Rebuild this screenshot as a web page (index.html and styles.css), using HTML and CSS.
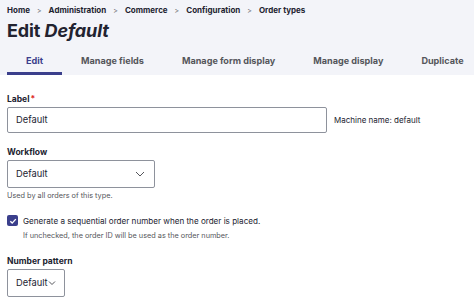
FILE: index.html
```html
<!DOCTYPE html>
<html lang="en">
<head>
    <meta charset="UTF-8">
    <title>Edit Default</title>
    <link rel="stylesheet" href="styles.css">
</head>
<body>
<div class="page_head">
    <div class="crumbs">
        <span>Home</span><span class="sep">&gt;</span>
        <span>Administration</span><span class="sep">&gt;</span>
        <span>Commerce</span><span class="sep">&gt;</span>
        <span>Configuration</span><span class="sep">&gt;</span>
        <span>Order types</span>
    </div>
    <h1 class="title">Edit <em>Default</em></h1>
    <div class="tabs">
        <a class="tab tab_active">Edit</a>
        <a class="tab">Manage fields</a>
        <a class="tab">Manage form display</a>
        <a class="tab">Manage display</a>
        <a class="tab">Duplicate</a>
    </div>
</div>
<div class="page_content">
    <div class="field field_label">
        <label class="lbl">Label<span class="req">*</span></label>
        <div class="row">
            <div class="input input_wide">Default</div>
            <span class="machine">Machine name: default</span>
        </div>
    </div>
    <div class="field field_wf">
        <label class="lbl">Workflow</label>
        <div class="input select select_wf">Default
            <svg class="chev" width="10" height="6" viewBox="0 0 10 6"><path d="M1 1l4 4 4-4" fill="none" stroke="#55565b" stroke-width="1"/></svg>
        </div>
        <div class="desc">Used by all orders of this type.</div>
    </div>
    <div class="field check_field">
        <div class="check_row">
            <span class="box"><svg width="10" height="10" viewBox="0 0 10 10"><path d="M2.3 5.2l1.9 1.9 3.6-4" fill="none" stroke="#fff" stroke-width="1.4"/></svg></span>
            <span class="check_lbl">Generate a sequential order number when the order is placed.</span>
        </div>
        <div class="desc desc_check">If unchecked, the order ID will be used as the order number.</div>
    </div>
    <div class="field field_np">
        <label class="lbl">Number pattern</label>
        <div class="input select select_np">Default
            <svg class="chev" width="8" height="6" viewBox="0 0 8 6"><path d="M1 1.5l3 3 3-3" fill="none" stroke="#55565b" stroke-width="1"/></svg>
        </div>
    </div>
</div>
</body>
</html>
```

FILE: styles.css
```css
html,body{
    margin: 0;
    padding: 0;
}
body{
    font-family: Inter, "Liberation Sans", sans-serif;
    color: #222330;
    background-color: #fff;
}
.page_head{
    background-color: #f3f4f9;
    padding: 5px 7px 0;
    height: 70px;
}
.crumbs{
    display: flex;
    align-items: center;
    font-size: 8px;
    font-weight: 700;
    height: 10px;
    white-space: nowrap;
}
.crumbs .sep{
    font-size: 7px;
    font-weight: 400;
    margin: 0 7px;
    color: #55565b;
}
.title{
    margin: 4px 0 0;
    font-size: 18px;
    line-height: 24px;
    font-weight: 700;
    color: #222330;
    letter-spacing: -0.1px;
}
.title em{
    font-style: italic;
}
.tabs{
    display: flex;
    margin-top: 8px;
}
.tab{
    flex-shrink: 0;
    white-space: nowrap;
    font-size: 9.1px;
    font-weight: 700;
    color: #55565b;
    padding: 0 19px;
    height: 24px;
    line-height: 20px;
    box-sizing: border-box;
    border-bottom: 3px solid transparent;
}
.tab_active{
    color: #3b3f8c;
    border-bottom-color: #3b3f8c;
}
.page_content{
    padding: 19px 7px 0;
}
.field{
    margin: 0;
}
.field_wf{
    margin-top: 14px;
}
.check_field{
    margin-top: 14px;
}
.field_np{
    margin-top: 15px;
}
.lbl{
    display: block;
    font-size: 8.5px;
    font-weight: 700;
    margin-bottom: 2px;
    line-height: 11px;
}
.req{
    color: #dc2323;
    margin-left: 1px;
}
.row{
    display: flex;
    align-items: center;
}
.input{
    box-sizing: border-box;
    border: 1px solid #8e929c;
    border-radius: 2px;
    font-size: 9.3px;
    height: 26px;
    line-height: 24px;
    padding: 0 8px;
    color: #222330;
}
.input_wide{
    width: 320px;
}
.machine{
    font-size: 8px;
    margin-left: 7px;
    color: #222330;
}
.select{
    display: flex;
    align-items: center;
    justify-content: space-between;
    height: 28px;
}
.select_wf{
    width: 148px;
    padding-right: 9px;
}
.select_np{
    width: 58px;
    padding-right: 8px;
}
.desc{
    font-size: 7.3px;
    color: #55565b;
    margin-top: 3px;
    line-height: 10px;
}
.check_row{
    display: flex;
    align-items: center;
}
.box{
    width: 11px;
    height: 11px;
    background-color: #3b3f8c;
    border-radius: 2px;
    display: flex;
    align-items: center;
    justify-content: center;
}
.check_lbl{
    font-size: 8.1px;
    margin-left: 5px;
}
.desc_check{
    margin-left: 16px;
    margin-top: 5px;
}
```
